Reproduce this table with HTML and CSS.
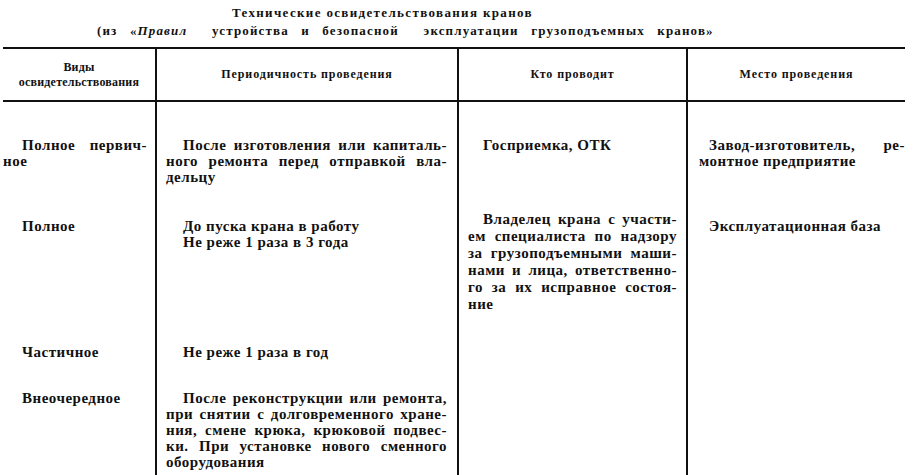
FILE: index.html
```html
<!DOCTYPE html>
<html lang="ru">
<head>
<meta charset="utf-8">
<title>Технические освидетельствования кранов</title>
<link rel="stylesheet" href="styles.css">
</head>
<body>
<div class="page">
  <div class="title">
    <div class="t1">Технические освидетельствования кранов</div>
    <div class="t2">(из «<i>Правил</i>&nbsp; устройства и безопасной&nbsp; эксплуатации грузоподъемных кранов»</div>
  </div>
  <div class="table">
    <div class="head">
      <div class="hc c1">Виды<br>освидетельствования</div>
      <div class="hc c2">Периодичность проведения</div>
      <div class="hc c3">Кто проводит</div>
      <div class="hc c4">Место проведения</div>
    </div>

    <div class="row r1">
      <div class="cell c1">
        <span class="ln j ind">Полное первич-</span>
        <span class="ln">ное</span>
      </div>
      <div class="cell c2">
        <span class="ln j ind">После изготовления или капиталь-</span>
        <span class="ln j">ного ремонта перед отправкой вла-</span>
        <span class="ln">дельцу</span>
      </div>
      <div class="cell c3">
        <span class="ln ind">Госприемка, ОТК</span>
      </div>
      <div class="cell c4">
        <span class="ln j ind">Завод-изготовитель, ре-</span>
        <span class="ln">монтное предприятие</span>
      </div>
    </div>

    <div class="row r2">
      <div class="cell c1">
        <span class="ln ind">Полное</span>
      </div>
      <div class="cell c2">
        <span class="ln ind">До пуска крана в работу</span>
        <span class="ln ind">Не реже 1 раза в 3 года</span>
      </div>
      <div class="cell c3">
        <div class="lifted">
          <span class="ln j ind">Владелец крана с участи-</span>
          <span class="ln j">ем специалиста по надзору</span>
          <span class="ln j">за грузоподъемными маши-</span>
          <span class="ln j">нами и лица, ответственно-</span>
          <span class="ln j">го за их исправное состоя-</span>
          <span class="ln">ние</span>
        </div>
      </div>
      <div class="cell c4">
        <span class="ln ind">Эксплуатационная база</span>
      </div>
    </div>

    <div class="row r3">
      <div class="cell c1">
        <span class="ln ind">Частичное</span>
      </div>
      <div class="cell c2">
        <span class="ln ind">Не реже 1 раза в год</span>
      </div>
      <div class="cell c3"></div>
      <div class="cell c4"></div>
    </div>

    <div class="row r4">
      <div class="cell c1">
        <span class="ln ind">Внеочередное</span>
      </div>
      <div class="cell c2">
        <span class="ln j ind">После реконструкции или ремонта,</span>
        <span class="ln j">при снятии с долговременного хране-</span>
        <span class="ln j">ния, смене крюка, крюковой подвес-</span>
        <span class="ln j">ки. При установке нового сменного</span>
        <span class="ln">оборудования</span>
      </div>
      <div class="cell c3"></div>
      <div class="cell c4"></div>
    </div>
  </div>
</div>
</body>
</html>
```

FILE: styles.css
```css
html, body {
  margin: 0;
  padding: 0;
  background: #ffffff;
  overflow: hidden;
}

.page {
  width: 922px;
  height: 475px;
  color: #111111;
  font-family: "Liberation Serif", "Times New Roman", serif;
  font-weight: bold;
}

.title {
  padding-top: 4px;
  font-size: 13px;
  line-height: 18px;
}

.t1 {
  padding-left: 232px;
  letter-spacing: 1.35px;
}

.t2 {
  padding-left: 97px;
  letter-spacing: 1.15px;
  word-spacing: 8px;
}

.table {
  margin-top: 7px;
  margin-left: 3px;
  width: 902px;
}

.head,
.row {
  display: grid;
  grid-template-columns: 154px 302px 229px 217px;
}

.head {
  border-top: 2px solid #111111;
  border-bottom: 2px solid #111111;
  height: 51px;
}

.hc {
  display: flex;
  align-items: center;
  justify-content: center;
  text-align: center;
  font-size: 12px;
  line-height: 15px;
  letter-spacing: 0.9px;
}

.hc.c1 {
  letter-spacing: 0.2px;
}

.c1, .c2, .c3 {
  border-right: 2px solid #111111;
}

.cell {
  font-size: 15px;
  line-height: 16px;
  letter-spacing: 0.5px;
  white-space: nowrap;
}

.cell.c1 { padding: var(--pt, 0) 8px var(--pb, 0) 0; }
.cell.c2 { padding: var(--pt, 0) 10px var(--pb, 0) 9px; }
.cell.c3 { padding: var(--pt, 0) 9px var(--pb, 0) 9px; }
.cell.c4 { padding: var(--pt, 0) 0 var(--pb, 0) 11px; }

.c1 .ind { padding-left: 19px; }
.c2 .ind { padding-left: 17px; }
.c3 .ind { padding-left: 15px; }
.c4 .ind { padding-left: 10px; }

.lifted {
  margin-top: -7px;
  line-height: 17px;
}

.ln {
  display: block;
  text-align: left;
}

.ln.j {
  text-align: justify;
  text-align-last: justify;
}

.r1 { --pt: 35px; --pb: 33px; }
.r2 { --pt: 0px; --pb: 31px; }
.r3 { --pt: 0px; --pb: 30px; }
.r4 { --pt: 0px; --pb: 5px; }
```
